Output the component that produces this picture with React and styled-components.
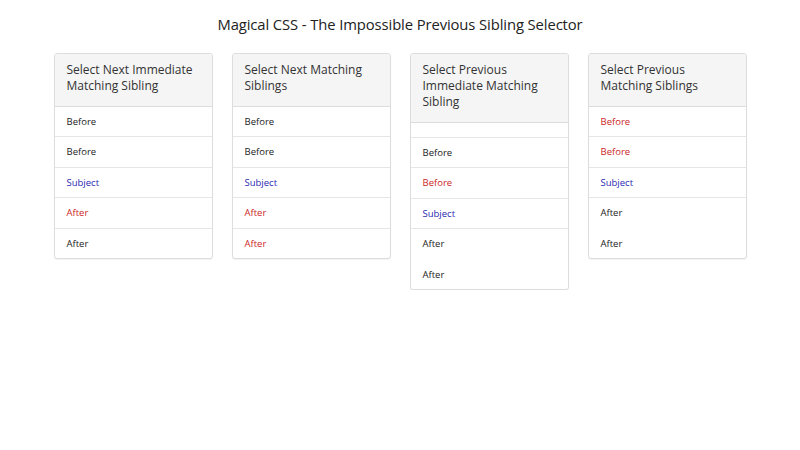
import styled, { createGlobalStyle } from "styled-components";

const GlobalStyle = createGlobalStyle`
  body {
    margin: 0;
    background: #fff;
    font-family: "Open Sans", "Noto Sans", sans-serif;
    color: #333;
  }
`;

const panels = [
  {
    title: "Select Next Immediate Matching Sibling",
    items: [
      { text: "Before" },
      { text: "Before" },
      { text: "Subject", tone: "subject" },
      { text: "After", tone: "match" },
      { text: "After" },
    ],
  },
  {
    title: "Select Next Matching Siblings",
    items: [
      { text: "Before" },
      { text: "Before" },
      { text: "Subject", tone: "subject" },
      { text: "After", tone: "match" },
      { text: "After", tone: "match" },
    ],
  },
  {
    title: "Select Previous Immediate Matching Sibling",
    items: [
      { text: "", empty: true },
      { text: "Before" },
      { text: "Before", tone: "match" },
      { text: "Subject", tone: "subject" },
      { text: "After" },
      { text: "After", plain: true },
    ],
  },
  {
    title: "Select Previous Matching Siblings",
    items: [
      { text: "Before", tone: "match" },
      { text: "Before", tone: "match" },
      { text: "Subject", tone: "subject" },
      { text: "After" },
      { text: "After", plain: true },
    ],
  },
];

function App() {
  return (
    <Page>
      <GlobalStyle />
      <Title>Magical CSS - The Impossible Previous Sibling Selector</Title>
      <Grid>
        {panels.map((panel) => (
          <Panel key={panel.title}>
            <PanelHeading>{panel.title}</PanelHeading>
            <List>
              {panel.items.map((item, i) => (
                <Item
                  key={i}
                  tone={item.tone}
                  plain={item.plain}
                  empty={item.empty}
                >
                  {item.text}
                </Item>
              ))}
            </List>
          </Panel>
        ))}
      </Grid>
    </Page>
  );
}

const Page = styled.div`
  width: 800px;
  padding-top: 13px;
`;

const Title = styled.h1`
  margin: 0 0 18px;
  text-align: center;
  font-size: 14.8px;
  font-weight: 400;
  letter-spacing: -0.1px;
  line-height: 22px;
  color: #222;
`;

const Grid = styled.div`
  display: flex;
  justify-content: center;
  align-items: flex-start;
  gap: 19px;
`;

const Panel = styled.div`
  width: 157px;
  border: 1px solid #ddd;
  border-radius: 3px;
  background: #fff;
  box-shadow: 0 1px 1px rgba(0, 0, 0, 0.05);
  overflow: hidden;
`;

const PanelHeading = styled.div`
  padding: 7.5px 12px 12px;
  background: #f5f5f5;
  border-bottom: 1px solid #ddd;
  font-size: 12px;
  line-height: 16px;
  color: #333;
`;

const List = styled.div`
  display: flex;
  flex-direction: column;
`;

const toneColor = {
  subject: "#2a2ab0",
  match: "#cc1f1f",
};

const Item = styled.div`
  padding: ${({ empty }) => (empty ? "7px 12px" : "8px 12px")};
  line-height: 13.6px;
  font-size: 9.5px;
  color: ${({ tone }) => toneColor[tone] || "#222"};
  border-top: 1px solid ${({ plain }) => (plain ? "transparent" : "#e6e6e6")};

  &:first-child {
    border-top: none;
  }
`;

export default App;
